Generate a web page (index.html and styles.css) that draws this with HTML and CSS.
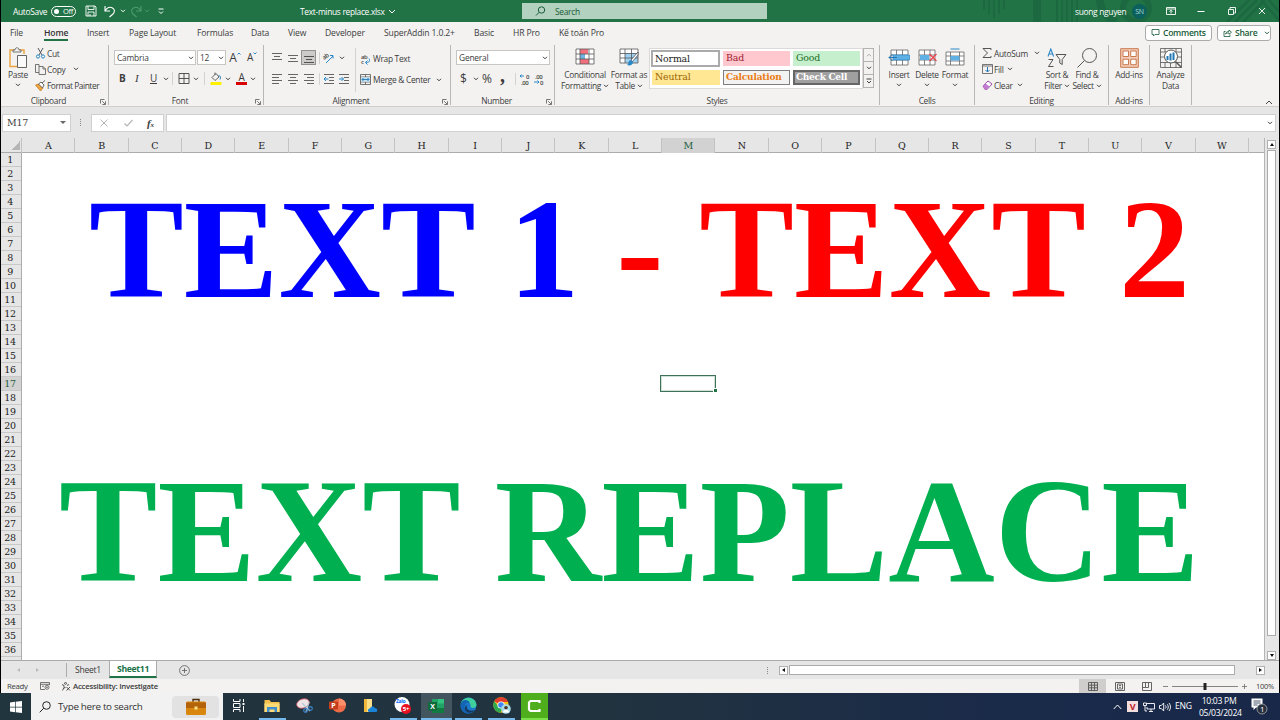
FILE: index.html
```html
<!DOCTYPE html>
<html lang="en">
<head>
    <meta charset="UTF-8">
    <meta name="viewport" content="width=device-width, initial-scale=1.0">
    <title>Text-minus replace.xlsx</title>
    <link rel="stylesheet" href="styles.css">
</head>
<body>
    <!-- shared icons -->
    <svg class="defs">
        <symbol id="caret" viewBox="0 0 6 4"><path d="M1 .8 3 2.8 5 .8" fill="none" stroke="currentColor" stroke-width="1"/></symbol>
        <symbol id="launcher" viewBox="0 0 6 6"><path d="M.5 4.5v-4h4M2.2 2.2l3 3M5.5 2.3v3.2H2.3" fill="none" stroke="#555" stroke-width=".8"/></symbol>
    </svg>

    <div class="window">
        <header class="title-bar">
            <svg class="swirls" width="300" height="22" viewBox="0 0 300 22" fill="none" stroke="#1c6840"><path d="M5 0v10M10 0v14M15 0v18M20 0v14M25 0v9M78 0v22M83 0v22M88 0v22M93 0v22M98 0v22" stroke-width="2"/><circle cx="157" cy="8" r="13" stroke-width="6"/><path d="M248 22l22-22M256 22l22-22M264 22l22-22M290 0l10 12M282 0l18 20" stroke-width="2.500"/><path d="M58 0v22M121 0c0 12 8 18 16 22" stroke-width="8"/></svg>
            <div class="quick-access">
                <span class="autosave">AutoSave</span>
                <span class="toggle"><i></i>Off</span>
                <svg width="12" height="12" viewBox="0 0 12 12" fill="none" stroke="#fff" stroke-width=".9"><path d="M1 1h9l1 1v9H1zM3 1v3.5h6V1M3 11V7h6v4M5 9v2"/></svg>
                <svg width="12" height="13" viewBox="0 0 12 13" fill="none" stroke="#fff" stroke-width="1.1"><path d="M1 1v5h5M1.3 5.5C3 2.5 6 1.5 8.5 3s2.500 4 .5 6L5.500 12"/></svg>
                <svg class="caret"><use href="#caret"/></svg>
                <svg width="12" height="13" viewBox="0 0 12 13" fill="none" stroke="#4f9a70" stroke-width="1.100"><path d="M11 1v5H6M10.700 5.500C9 2.500 6 1.500 3.500 3S1 7 3 9l3.500 3"/></svg>
                <svg class="caret faded"><use href="#caret"/></svg>
                <svg width="6" height="7" viewBox="0 0 6 7" fill="none" stroke="#fff"><path d="M.5 1h5M1 3.500l2 2 2-2"/></svg>
            </div>
            <div class="file-name">Text-minus replace.xlsx <svg width="8" height="5" viewBox="0 0 8 5"><path d="M1 1l3 3 3-3" fill="none" stroke="#fff"/></svg></div>
            <div class="search"><svg width="11" height="10" viewBox="0 0 11 10" fill="none" stroke="#185c37"><circle cx="6.500" cy="4" r="3.200"/><path d="M4.200 6.300 1 9.500"/></svg>Search</div>
            <div class="account">
                <span class="user">suong nguyen</span>
                <span class="avatar">SN</span>
                <svg width="10" height="8" viewBox="0 0 10 8" fill="none" stroke="#fff" stroke-width=".9"><path d="M.5.5h9v7h-9zM.5 2h9M5 6.500V3.200M3.500 4.700 5 3.200l1.500 1.500"/></svg>
                <svg width="8" height="8" viewBox="0 0 8 8"><path d="M.5 4.500h7" stroke="#fff"/></svg>
                <svg width="8" height="8" viewBox="0 0 8 8" fill="none" stroke="#fff" stroke-width=".9"><path d="M.500 2.500h5v5h-5zM2 2.300V.500h5.500V6H5.700"/></svg>
                <svg width="8" height="8" viewBox="0 0 8 8"><path d="M1 1l6 6M7 1 1 7" stroke="#fff" stroke-width=".9"/></svg>
            </div>
        </header>

        <nav class="tabs">
            <div class="tab-list">
                <span>File</span><span><b class="active">Home</b></span><span>Insert</span><span>Page Layout</span><span>Formulas</span><span>Data</span><span>View</span><span>Developer</span><span>SuperAddin 1.0.2+</span><span>Basic</span><span>HR Pro</span><span>Kế toán Pro</span>
            </div>
            <span class="pill comments"><svg width="9" height="8" viewBox="0 0 9 8" fill="none" stroke="#185c37" stroke-width=".8"><path d="M1 .500h7v5H4L2.500 7V5.500H1z"/></svg>Comments</span>
            <span class="pill share"><svg width="9" height="8" viewBox="0 0 9 8" fill="none" stroke="#185c37" stroke-width=".8"><path d="M2.500 2.500H1v5h6V5.500M2.500 5c.500-2 2-2.500 3.500-2.500V1l2.500 2.200L6 5.200V4c-1.500 0-2.500 0-3.500 1z"/></svg>Share<svg class="caret"><use href="#caret"/></svg></span>
        </nav>

        <section class="ribbon">
            <div class="group clipboard">
                <div class="body">
                    <div class="big">
                        <svg width="20" height="22" viewBox="0 0 20 22" fill="none"><path d="M9 19.500H2V3h14v4" stroke="#e8a33d" stroke-width="1.400"/><path d="M5 5V3h2c0-3 4-3 4 0h2v2z" fill="#f3f2f1" stroke="#666" stroke-width=".9"/><path d="M9.500 8.500h9v12h-9z" fill="#fafafa" stroke="#555" stroke-width=".9"/></svg>
                        <span>Paste</span><svg class="caret"><use href="#caret"/></svg>
                    </div>
                    <div class="list">
                        <div><svg width="11" height="11" viewBox="0 0 11 11" fill="none"><path d="M3 0l4 7M8 0 4 7" stroke="#555"/><circle cx="3" cy="8.500" r="1.600" stroke="#2b88c8"/><circle cx="8" cy="8.500" r="1.600" stroke="#2b88c8"/></svg><span>Cut</span></div>
                        <div><svg width="11" height="11" viewBox="0 0 11 11" fill="none" stroke="#555" stroke-width=".8"><path d="M4 2.500V.500H.500v8H4M4 2.500h4l2.500 2.500v5.500H4zM8 2.500V5h2.500"/></svg><span>Copy</span><svg class="caret"><use href="#caret"/></svg></div>
                        <div><svg width="11" height="11" viewBox="0 0 11 11"><path d="M.500 5 4 4l4 4-2.500 3z" fill="#f2a640" stroke="#c87816" stroke-width=".8"/><path d="M3.500 4l2.500-2 3 3-1.500 3zM7 3l3-2.500" fill="#fff" stroke="#555" stroke-width=".9"/></svg><span class="painter">Format Painter</span></div>
                    </div>
                </div>
                <div class="label">Clipboard<svg class="launcher"><use href="#launcher"/></svg></div>
            </div>

            <div class="group font">
                <div class="body rows">
                    <div class="font-top">
                        <span class="combo">Cambria<svg class="caret"><use href="#caret"/></svg></span>
                        <span class="combo">12<svg class="caret"><use href="#caret"/></svg></span>
                        <span class="grow">A<svg width="4" height="3" viewBox="0 0 4 3"><path d="M.5 2.500 2 1l1.500 1.500" fill="none" stroke="#2b88c8"/></svg></span>
                        <span class="grow small">A<svg width="4" height="3" viewBox="0 0 4 3"><path d="M.5.5 2 2 3.500.5" fill="none" stroke="#2b88c8"/></svg></span>
                    </div>
                    <div class="font-bottom">
                        <b>B</b><em>I</em><u>U</u><svg class="caret"><use href="#caret"/></svg>
                        <svg width="18" height="13" viewBox="0 0 18 13" fill="none"><path d="M.500 0v13" stroke="#d4d2d0"/><path d="M7 1.500h10v10H7zM12 1.500v10M7 6.500h10" stroke="#444" stroke-width=".9"/></svg>
                        <svg class="caret"><use href="#caret"/></svg>
                        <svg width="18" height="13" viewBox="0 0 18 13" fill="none"><path d="M.500 0v13" stroke="#d4d2d0"/><path d="M8 5.500l4-4 3 3.500-4 3.500zM11 3V.500" stroke="#555" stroke-width=".9"/><path d="M14.500 3.500c2 0 2.500 2 1.500 4" stroke="#2b88c8"/><path d="M6.500 10h11v3h-11z" fill="#fff200"/></svg>
                        <svg class="caret"><use href="#caret"/></svg>
                        <span class="font-color">A</span>
                        <svg class="caret"><use href="#caret"/></svg>
                    </div>
                </div>
                <div class="label">Font<svg class="launcher"><use href="#launcher"/></svg></div>
            </div>

            <div class="group alignment">
                <div class="body">
                    <div class="align-grid">
                        <svg width="10" height="10" viewBox="0 0 10 10"><path d="M0 .500h10M2 3.500h6M0 6.500h10" stroke="#555" stroke-width=".9"/></svg>
                        <svg width="10" height="10" viewBox="0 0 10 10"><path d="M0 2.500h10M2 5.500h6M0 8.500h10" stroke="#555" stroke-width=".9"/></svg>
                        <span class="pressed"><svg width="10" height="10" viewBox="0 0 10 10"><path d="M0 3.500h10M2 6.500h6M0 9.500h10" stroke="#444" stroke-width=".9"/></svg></span>
                        <svg width="15" height="12" viewBox="0 0 15 12" fill="none"><path d="M.500 0v12" stroke="#d4d2d0"/><text x="4" y="7" class="tiny" transform="rotate(-35 6 6)">ab</text><path d="M7 11l7-7M11 3.500h3v3" stroke="#2b88c8"/></svg>
                        <svg class="caret"><use href="#caret"/></svg>
                        <svg width="10" height="10" viewBox="0 0 10 10"><path d="M0 .500h10M0 3.500h7M0 6.500h10M0 9.500h7" stroke="#555" stroke-width=".9"/></svg>
                        <svg width="10" height="10" viewBox="0 0 10 10"><path d="M0 .500h10M2 3.500h6M0 6.500h10M2 9.500h6" stroke="#555" stroke-width=".9"/></svg>
                        <svg width="10" height="10" viewBox="0 0 10 10"><path d="M0 .500h10M3 3.500h7M0 6.500h10M3 9.500h7" stroke="#555" stroke-width=".9"/></svg>
                        <svg width="15" height="12" viewBox="0 0 15 12" fill="none"><path d="M.500 0v12" stroke="#d4d2d0"/><path d="M5 1.500h10M10 4.500h5M10 7.500h5M5 10.500h10" stroke="#555" stroke-width=".9"/><path d="M5 6h4.500M7 4 5 6l2 2" stroke="#2b88c8"/></svg>
                        <svg width="10" height="10" viewBox="0 0 10 10" fill="none"><path d="M0 .500h10M5 3.500h5M5 6.500h5M0 9.500h10" stroke="#555" stroke-width=".9"/><path d="M0 5h4.500M2.500 3l2 2-2 2" stroke="#2b88c8"/></svg>
                    </div>
                    <div class="wrap-col">
                        <div><svg width="11" height="12" viewBox="0 0 11 12"><text x="1" y="5.500" class="tiny">ab</text><text x="1" y="11" class="tiny">c</text><path d="M9 5.500c1.500 3 0 4-3.500 4M7.500 7.500l-2 2 2 2" fill="none" stroke="#2b88c8"/></svg><span>Wrap Text</span></div>
                        <div><svg width="11" height="11" viewBox="0 0 11 11" fill="none"><path d="M.5.5h10v10H.5zM.5 3h10M.5 8h10M5.500.5V3M5.500 8v2.500" stroke="#555" stroke-width=".8"/><path d="M1 3.300h9v4.400H1z" fill="#c5e3f5"/><path d="M2 5.500h7M3.500 4 2 5.500 3.500 7M7.500 4 9 5.500 7.500 7" stroke="#2077b4" stroke-width=".9"/></svg><span>Merge &amp; Center</span><svg class="caret"><use href="#caret"/></svg></div>
                    </div>
                </div>
                <div class="label">Alignment<svg class="launcher"><use href="#launcher"/></svg></div>
            </div>

            <div class="group number">
                <div class="body rows">
                    <span class="combo">General<svg class="caret"><use href="#caret"/></svg></span>
                    <div class="number-row">
                        <span class="sym">$</span><svg class="caret"><use href="#caret"/></svg><span class="sym">%</span><span class="sym comma">,</span>
                        <svg width="16" height="12" viewBox="0 0 16 12"><path d="M.500 0v12" stroke="#d4d2d0"/><path d="M5 3h4M6.500 1.500 5 3l1.500 1.500" fill="none" stroke="#2b88c8"/><text x="11" y="5.500" class="tiny">0</text><text x="6" y="11.500" class="tiny">.00</text></svg>
                        <svg width="11" height="12" viewBox="0 0 11 12"><text x="1" y="5.500" class="tiny">.00</text><text x="6" y="11.500" class="tiny">0</text><path d="M0 9h5M3.500 7.500 5 9l-1.500 1.500" fill="none" stroke="#2b88c8"/></svg>
                    </div>
                </div>
                <div class="label">Number<svg class="launcher"><use href="#launcher"/></svg></div>
            </div>

            <div class="group styles">
                <div class="body">
                    <div class="big cond">
                        <svg width="20" height="17" viewBox="0 0 20 17"><path d="M1 1h18v15H1z" fill="#fff"/><path d="M5 1h8v5H5zM5 11h9v5H5z" fill="#f0717d"/><path d="M5 6h5v5H5z" fill="#6db3e3"/><path d="M1 1h18v15H1zM1 6h18M1 11h18M5 1v15M14 1v15" fill="none" stroke="#555" stroke-width=".8"/></svg>
                        <span>Conditional<br>Formatting <svg class="caret"><use href="#caret"/></svg></span>
                    </div>
                    <div class="big table">
                        <svg width="20" height="18" viewBox="0 0 20 18"><path d="M1 1h18v14H1z" fill="#fff"/><path d="M6 5h13v10H6z" fill="#9fd0f0"/><path d="M1 1h18v14H1zM1 5.500h18M1 10h18M6 1v14M12.500 1v14" fill="none" stroke="#555" stroke-width=".8"/><path d="M19 4l-7 8 1 2 6-7z" fill="#fff" stroke="#444" stroke-width=".7"/><path d="M12 12c-3 0-2 4-4 5 3 1 6 0 6-3z" fill="#2b88c8"/></svg>
                        <span>Format as<br>Table <svg class="caret"><use href="#caret"/></svg></span>
                    </div>
                    <div class="gallery">
                        <span class="normal">Normal</span><span class="bad">Bad</span><span class="good">Good</span>
                        <span class="neutral">Neutral</span><span class="calc">Calculation</span><span class="check">Check Cell</span>
                    </div>
                    <div class="gallery-scroll">
                        <span><svg class="caret flip faded-dark"><use href="#caret"/></svg></span>
                        <span><svg class="caret"><use href="#caret"/></svg></span>
                        <span><svg width="6" height="6" viewBox="0 0 6 6"><path d="M.500 1h5M1 3l2 2 2-2" fill="none" stroke="#444"/></svg></span>
                    </div>
                </div>
                <div class="label">Styles</div>
            </div>

            <div class="group cells">
                <div class="body">
                    <div class="big">
                        <svg width="22" height="19" viewBox="0 0 22 19"><path d="M3 2h17v15H3zM3 7h17M3 12h17M8.500 2v15M14.500 2v15" fill="#fff" stroke="#666" stroke-width=".8"/><path d="M5 7h16.500v5H5z" fill="#5fb0e5" stroke="#2b88c8" stroke-width=".7"/><path d="M9 9.500H1M4.500 6 1 9.500 4.500 13" fill="none" stroke="#2077b4"/></svg>
                        <span>Insert</span><svg class="caret"><use href="#caret"/></svg>
                    </div>
                    <div class="big">
                        <svg width="22" height="19" viewBox="0 0 22 19"><path d="M3 2h16v15H3zM3 7h16M3 12h16M8.500 2v15M14 2v15" fill="#fff" stroke="#666" stroke-width=".8"/><path d="M4 7h9v5H4z" fill="#5fb0e5"/><path d="M13.500 6l7 7M20.500 6l-7 7" stroke="#e8434d" stroke-width="1.200"/></svg>
                        <span>Delete</span><svg class="caret"><use href="#caret"/></svg>
                    </div>
                    <div class="big">
                        <svg width="20" height="19" viewBox="0 0 20 19"><path d="M1 4h18v13H1zM1 8h18M1 13h18M5.500 4v13M14.500 4v13" fill="#fff" stroke="#666" stroke-width=".8"/><path d="M5.500 8h9v4.500h-9z" fill="#5fb0e5"/><path d="M5.500 1h9" stroke="#2b88c8"/></svg>
                        <span>Format</span><svg class="caret"><use href="#caret"/></svg>
                    </div>
                </div>
                <div class="label">Cells</div>
            </div>

            <div class="group editing">
                <div class="body">
                    <div class="list">
                        <div><svg width="11" height="10" viewBox="0 0 11 10"><path d="M9 2V.500H1L5.500 5 1 9.500h8V8" fill="none" stroke="#555"/></svg><span>AutoSum</span><svg class="caret far"><use href="#caret"/></svg></div>
                        <div><svg width="11" height="10" viewBox="0 0 11 10" fill="none"><path d="M.500.500h10v9H.500zM.500 2h10" stroke="#555" stroke-width=".8"/><path d="M5.500 3v5M3.500 6l2 2 2-2" stroke="#2077b4"/></svg><span>Fill</span><svg class="caret"><use href="#caret"/></svg></div>
                        <div><svg width="11" height="10" viewBox="0 0 11 10"><path d="M1 6l5-5 4 3-5 5.500H3z" fill="#fff" stroke="#9b4fa8"/><path d="M1 6l2.500-2.500 4 3L5 9.500H3z" fill="#c17bd0"/></svg><span>Clear</span><svg class="caret"><use href="#caret"/></svg></div>
                    </div>
                    <div class="big">
                        <svg width="20" height="20" viewBox="0 0 20 20" fill="none"><path d="M1 8.500 3.800 1l2.800 7.500M2 6h3.600" stroke="#2b88c8" stroke-width="1.100"/><path d="M1.500 11.500H6L1.500 18.500H6.500M9 6.500h10l-3.800 5v5l-2.400-1.500v-3.500z" stroke="#555"/></svg>
                        <span>Sort &amp;<br>Filter <svg class="caret"><use href="#caret"/></svg></span>
                    </div>
                    <div class="big">
                        <svg width="20" height="20" viewBox="0 0 20 20" fill="none" stroke="#555"><circle cx="12.500" cy="7.500" r="7"/><path d="M7.500 12.500.500 19.500"/></svg>
                        <span>Find &amp;<br>Select <svg class="caret"><use href="#caret"/></svg></span>
                    </div>
                </div>
                <div class="label">Editing</div>
            </div>

            <div class="group addins">
                <div class="body">
                    <div class="big">
                        <svg width="19" height="20" viewBox="0 0 19 20" fill="#fff" stroke="#c8784d" stroke-width="1"><path d="M.700.700h17.600v18.600H.700z" fill="#f3cdb8"/><path d="M3 3h5.500v5.500H3zM10.700 3h5.500v5.500h-5.500zM3 11.200h5.500v5.500H3zM10.700 11.200h5.500v5.500h-5.500z"/></svg>
                        <span>Add-ins</span>
                    </div>
                </div>
                <div class="label">Add-ins</div>
            </div>

            <div class="group analyze">
                <div class="body">
                    <div class="big">
                        <svg width="22" height="21" viewBox="0 0 22 21" fill="none" stroke="#555"><path d="M.500.500h21v19H.500zM.500 4h21M.500 9h4M.500 14.500h21M17 9h5M5 14v6M10.500 15v5M16 15v5M5 .500V4M16 .500V4" stroke-width=".8"/><circle cx="11" cy="8.500" r="6.500" fill="#fff"/><path d="M15.500 13.500l6 6" stroke-width="1.500"/><path d="M7.500 12V8M10.500 12.500V5.500M13.500 12V4.500" stroke="#2077b4" stroke-width="2"/></svg>
                        <span>Analyze<br>Data</span>
                    </div>
                </div>
            </div>
            <svg class="collapse" width="8" height="5" viewBox="0 0 8 5"><path d="M1 4l3-3 3 3" fill="none" stroke="#444"/></svg>
        </section>

        <div class="formula-bar">
            <span class="name-box">M17<i class="down"></i></span>
            <span class="grip"></span>
            <span class="fx-box">
                <svg width="8" height="8" viewBox="0 0 8 8"><path d="M.500.500l7 7M7.500.500l-7 7" stroke="#b5b5b5"/></svg>
                <svg width="9" height="8" viewBox="0 0 9 8"><path d="M.500 4.500l2.500 2.500 5.500-6" fill="none" stroke="#b5b5b5" stroke-width="1.200"/></svg>
                <em>f<small>x</small></em>
            </span>
            <span class="formula"><svg class="caret"><use href="#caret"/></svg></span>
        </div>

        <main class="grid-area">
            <div class="sheet">
                <div class="col-heads" id="cols"><span class="corner"></span></div>
                <div class="sheet-body">
                    <div class="row-heads" id="rows"></div>
                    <div class="canvas">
                        <div class="line-one"><span class="blue">TEXT 1</span> <span class="red dash">-</span> <span class="red">TEXT 2</span></div>
                        <div class="line-two">TEXT REPLACE</div>
                        <div class="cursor"></div>
                    </div>
                </div>
            </div>
            <div class="v-scroll"><span class="arrow up"></span><span class="v-thumb"></span><span class="arrow dn"></span></div>
        </main>

        <div class="sheet-tabs">
            <span class="nav-arrow left"></span><span class="nav-arrow right"></span>
            <span class="sheet-tab">Sheet1</span>
            <span class="sheet-tab current">Sheet11</span>
            <svg class="add" width="11" height="11" viewBox="0 0 11 11" fill="none" stroke="#666" stroke-width=".9"><circle cx="5.500" cy="5.500" r="4.900"/><path d="M5.500 3v5M3 5.500h5"/></svg>
            <span class="grip"></span>
            <div class="h-scroll"><span class="arrow lt"></span><span class="h-thumb"></span><span class="arrow rt"></span></div>
        </div>

        <footer class="status">
            <span class="ready">Ready</span>
            <svg width="10" height="8" viewBox="0 0 10 8" fill="none" stroke="#555" stroke-width=".8"><path d="M5 7.500H.500v-7h9V3M.500 2.300h9M2 4.200h2"/><circle cx="7" cy="5.300" r="2"/><circle cx="7" cy="5.300" r=".5"/></svg>
            <svg class="acc" width="10" height="9" viewBox="0 0 10 9" fill="none" stroke="#444" stroke-width=".9"><circle cx="4.500" cy="1.400" r="1"/><path d="M1 2.500l2 1v2L1.500 8.500M8 2.500l-2 1M3 6l1.500-.5M5.500 5l3.500 3.500M9 5 5.500 8.500"/></svg>
            <span class="acc-text">Accessibility: Investigate</span>
            <div class="views">
                <span class="on"><svg width="10" height="9" viewBox="0 0 10 9" fill="none" stroke="#555" stroke-width=".9"><path d="M.500.500h9v8h-9zM.500 3.200h9M.500 5.800h9M3.500.500v8M6.500.500v8"/></svg></span>
                <span><svg width="10" height="9" viewBox="0 0 10 9" fill="none" stroke="#555" stroke-width=".9"><path d="M.500.500h9v8h-9zM2.500 2h5v5h-5zM4 3.500h2M4 5.300h2"/></svg></span>
                <span><svg width="10" height="9" viewBox="0 0 10 9" fill="none" stroke="#555" stroke-width=".9"><path d="M.500.500h9v8h-9zM3.500.500v5h3v-5M.500 5.500h3"/></svg></span>
            </div>
            <svg class="zoom" width="86" height="9" viewBox="0 0 86 9"><path d="M1 4.500h5M10 4.500h66M80 4.500h5M82.500 2v5" stroke="#777" stroke-width=".9"/><path d="M41.500 1h3v7h-3z" fill="#222"/></svg>
            <span class="percent">100%</span>
        </footer>
    </div>

    <div class="taskbar">
        <span class="start"><svg width="12" height="12" viewBox="0 0 12 12" fill="#fff"><path d="M0 1.500l5-.7v4.900H0zM5.700.700 12 0v5.700H5.700zM0 6.400h5v4.800l-5-.7zM5.700 6.400H12V12l-6.300-.8z"/></svg></span>
        <div class="task-search">
            <svg width="12" height="12" viewBox="0 0 12 12" fill="none" stroke="#222"><circle cx="7.500" cy="4.500" r="3.800"/><path d="M4.700 7.300.700 11.300"/></svg>
            <span>Type here to search</span>
            <i><svg width="22" height="18" viewBox="0 0 22 18"><path d="M8 4V1.500h6V4" fill="none" stroke="#4a2c0c" stroke-width="1.400"/><rect x="1" y="3.500" width="20" height="13.500" rx="1.500" fill="#d9860f"/><path d="M1 4.500h20V10H1z" fill="#b3640b"/><path d="M9.500 8.500h3v3h-3z" fill="#ffe08a"/></svg></i>
        </div>
        <div class="apps">
            <span><svg width="13" height="13" viewBox="0 0 13 13" fill="none" stroke="#fff"><path d="M.500 0v2.500h6.500V0M.500 13v-2.500h6.500V13M.500 4.500h6.500v4H.500zM10.500 0v3M10.500 7v6"/><path d="M9.500 4h2v2h-2z" fill="#fff" stroke="none"/></svg></span>
            <span class="open"><svg width="16" height="14" viewBox="0 0 16 14"><path d="M.500 1h5l1.500 2h8.500v10H.500z" fill="#f3c14b"/><path d="M.500 4.500h15V13H.500z" fill="#ffdb78"/><path d="M3 13V8h10v5h-2.500v-2.500h-5V13z" fill="#3f8fd0"/></svg></span>
            <span><svg width="17" height="15" viewBox="0 0 17 15"><ellipse cx="7" cy="5.500" rx="6.500" ry="4.500" fill="#f0e4e6" stroke="#d05060" stroke-width=".7" transform="rotate(-18 7 5.500)"/><path d="M6 5l8 8M13 4l-3 10" stroke="#b8c8d4" stroke-width="1.300"/><circle cx="9.500" cy="12.500" r="1.800" fill="none" stroke="#3c84c8" stroke-width="1.200"/><circle cx="14.500" cy="10.500" r="1.800" fill="none" stroke="#3c84c8" stroke-width="1.200"/></svg></span>
            <span><svg width="17" height="15" viewBox="0 0 17 15"><circle cx="10" cy="7.500" r="7" fill="#ed6c47"/><path d="M10 .500a7 7 0 0 1 7 7h-7z" fill="#ff8f6b"/><rect y="3.500" width="9" height="8" rx="1" fill="#c43e1c"/><text x="2.200" y="10" class="logo">P</text></svg></span>
            <span><svg width="15" height="15" viewBox="0 0 15 15"><path d="M1 1h8v13H1z" fill="#ffe08a"/><path d="M1 1h3v13H1z" fill="#f0b93c"/><path d="M6 14c-2-1-1-3.500 1-3.500.8-2.500 4-2.500 4.700-.5 3 0 3.300 3.500 1.300 4z" fill="#1b84d8"/></svg></span>
            <span class="open"><svg width="18" height="17" viewBox="0 0 18 17"><circle cx="8" cy="7.500" r="7.500" fill="#fff"/><text x="2" y="6" class="zalo">Zalo</text><circle cx="12" cy="12" r="5" fill="#e81123"/><text x="8.800" y="14.300" class="badge">5+</text></svg></span>
            <span class="open focused"><svg width="16" height="14" viewBox="0 0 16 14"><path d="M4 0h12v14H4z" fill="#21a366"/><path d="M10 0h6v4.500h-6z" fill="#33c481"/><path d="M4 9h12v5H4z" fill="#107c41"/><path d="M0 3h9v8.500H0z" fill="#0f6b39"/><text x="2.200" y="10" class="logo">X</text></svg></span>
            <span class="open"><svg width="17" height="17" viewBox="0 0 17 17"><circle cx="8.500" cy="8.500" r="8" fill="#1b78ca"/><path d="M.700 7C2-1 15-2 16.500 7.500c0 4-5 4-6 2.500 1-3-2-5.500-5-4.500-2 .500-4 1-4.800 1.500z" fill="#3fcf9c"/><path d="M.700 7C2 1.500 9 2 10 6.500 7 4.500 4 6.500 4.500 10.500c.5 3 3 5.500 6.500 5.600C5 18-.500 13 .700 7z" fill="#1464b4"/><path d="M7 8c-1.500 4 2 7 8 5-2 3-7 4-9 1-2-2-1-5 1-6z" fill="#16385c"/></svg></span>
            <span class="open"><svg width="18" height="17" viewBox="0 0 18 17"><circle cx="8" cy="8" r="7.700" fill="#fbc116"/><path d="M8 8 1.300 4.200A7.700 7.700 0 0 1 14.700 4.200L15 5H8z" fill="#e33b2e"/><path d="M1.300 4.200a7.700 7.700 0 0 0 6 11.500L10 11 5 9z" fill="#2da94f"/><circle cx="8" cy="8" r="3.600" fill="#fff"/><circle cx="8" cy="8" r="2.800" fill="#4285f4"/><circle cx="13" cy="12" r="4.800" fill="#a8dbe8"/><circle cx="13" cy="10.800" r="1.800" fill="#4b3428"/><path d="M9.800 15.500c1-4 5.500-4 6.500 0z" fill="#fff"/></svg></span>
            <span class="camtasia"><svg width="14" height="14" viewBox="0 0 14 14"><path d="M12.500 4V2H3.500L2 3.500v7L3.500 12h9v-2" fill="none" stroke="#fff" stroke-width="2.200"/></svg></span>
        </div>
        <div class="tray">
            <svg width="9" height="6" viewBox="0 0 9 6"><path d="M.700 5l3.800-4 3.800 4" fill="none" stroke="#fff"/></svg>
            <span class="unikey">V</span>
            <svg width="12" height="10" viewBox="0 0 12 10" fill="none" stroke="#fff" stroke-width=".9"><path d="M4 1.500h7.500v5.500H4V5M.500 1h3v2.500h-3zM2 3.500v5.500h2M6 9.500h4M8 7v2.500"/></svg>
            <svg width="12" height="10" viewBox="0 0 12 10" fill="none" stroke="#fff" stroke-width=".9"><path d="M.500 3.500h1.800L4.700 1v8L2.300 6.500H.500zM6.500 3.500c.7 1 .7 2 0 3M8.300 2.300c1.300 2 1.300 3.400 0 5.400M10 1c2 3 2 5 0 8"/></svg>
            <span class="lang">ENG</span>
            <span class="clock">10:03 PM<br>05/03/2024</span>
            <svg class="note" width="17" height="17" viewBox="0 0 17 17"><path d="M.500.500h11v9H5L2.500 12V9.500h-2z" fill="#fff"/><path d="M2.500 3h7M2.500 5h7M2.500 7h4" stroke="#1d2c48" stroke-width=".8"/><circle cx="11" cy="11" r="5" fill="#26303f" stroke="#aaa" stroke-width=".8"/><text x="9" y="13.800" class="count">1</text></svg>
        </div>
    </div>

    <script>
        // column letters A-W and row numbers 1-36
        const cols = document.getElementById('cols');
        const rows = document.getElementById('rows');
        for (let i = 0; i < 23; i++) {
            const cell = document.createElement('span');
            cell.textContent = String.fromCharCode(65 + i);
            if (cell.textContent === 'M') cell.className = 'selected';
            cols.appendChild(cell);
        }
        for (let i = 1; i <= 36; i++) {
            const cell = document.createElement('span');
            cell.textContent = i;
            if (i === 17) cell.className = 'selected';
            rows.appendChild(cell);
        }
    </script>
</body>
</html>
```
FILE: styles.css
```css
* {
    box-sizing: border-box;
}
body {
    margin: 0;
    width: 1280px;
    height: 720px;
    overflow: hidden;
    font-family: 'Open Sans', 'Noto Sans', sans-serif;
    font-size: 8.4px;
    letter-spacing: -0.3px;
    line-height: 11px;
    color: #3c3c3c;
    background: #000;
    white-space: nowrap;
}
svg {
    flex: none;
    display: block;
}
.defs {
    position: absolute;
    width: 0;
    height: 0;
}
.caret {
    width: 6px;
    height: 4px;
}
.window {
    height: 693px;
    border-left: 1px solid #000;
    border-right: 1px solid #000;
    background: #e6e6e6;
    display: flex;
    flex-direction: column;
}

/* title bar */
.title-bar {
    position: relative;
    height: 22px;
    background: #217346;
    color: #fff;
    display: grid;
    grid-template-columns: 299px 222px 245px 1fr;
    align-items: center;
}
.quick-access {
    display: grid;
    grid-template-columns: 38px 34px 19px 16px 10px 14px 14px 8px;
    align-items: center;
    padding-left: 12px;
}
.toggle {
    width: 25px;
    height: 11px;
    border: 1px solid #fff;
    border-radius: 6px;
    display: flex;
    align-items: center;
    gap: 4px;
    padding-left: 2px;
    font-size: 7.5px;
}
.toggle i {
    width: 5px;
    height: 5px;
    border-radius: 50%;
    background: #fff;
}
.faded {
    color: #4f9a70;
}
.file-name {
    display: flex;
    align-items: center;
    gap: 3px;
}
.search {
    height: 16px;
    background: #b3d1bf;
    color: #185c37;
    display: flex;
    align-items: center;
    gap: 9px;
    padding-left: 13px;
}
.swirls {
    position: absolute;
    right: 0;
    top: 0;
}
.account {
    position: relative;
    display: grid;
    grid-template-columns: 57px 34px 31px 31px 30px 8px;
    align-items: center;
    padding-left: 308px;
}
.avatar {
    width: 15px;
    height: 15px;
    border-radius: 50%;
    background: #0b5f5c;
    color: #a9dcd9;
    font-size: 7px;
    line-height: 15px;
    text-align: center;
}

/* ribbon tabs */
.tabs {
    height: 22px;
    background: #f3f2f1;
    display: flex;
    align-items: center;
}
.tab-list {
    flex: 1;
    display: grid;
    grid-template-columns: 34px 43px 42px 68px 54px 37px 37px 59px 90px 39px 46px 60px;
    padding-left: 9px;
    height: 22px;
    line-height: 22px;
    font-size: 8.6px;
    letter-spacing: -0.15px;
}
.active {
    display: inline-block;
    height: 19px;
    border-bottom: 2px solid #217346;
    color: #333;
    font-weight: 600;
    vertical-align: top;
}
.pill {
    height: 16px;
    border: 1px solid #aaa;
    border-radius: 3px;
    background: #fff;
    color: #185c37;
    font-weight: 600;
    font-size: 8.6px;
    display: flex;
    align-items: center;
    gap: 3px;
    padding-left: 5px;
}
.comments {
    width: 67px;
    margin-right: 5px;
}
.share {
    width: 54px;
    margin-right: 8px;
}
.share .caret {
    margin-left: 4px;
}

/* ribbon */
.ribbon {
    height: 63px;
    background: #f3f2f1;
    border-bottom: 1px solid #d0cecc;
    display: flex;
}
.group {
    height: 60px;
    margin-top: 1px;
    border-right: 1px solid #b9b7b5;
}
.body {
    height: 50px;
    display: flex;
}
.rows {
    flex-direction: column;
}
.label {
    height: 12px;
    line-height: 12px;
    padding-right: 12px;
    text-align: center;
    position: relative;
}
.launcher {
    position: absolute;
    right: 2px;
    top: 4px;
    width: 6px;
    height: 6px;
}
.clipboard { width: 108px; }
.font { width: 155px; }
.alignment { width: 187px; }
.number { width: 104px; }
.styles { width: 325px; }
.cells { width: 95px; }
.editing { width: 134px; }
.addins { width: 41px; }
.analyze { width: 42px; }
.styles .label,
.cells .label,
.editing .label,
.addins .label {
    padding-right: 0;
}
.big {
    display: flex;
    flex-direction: column;
    align-items: center;
    text-align: center;
}
.big > svg:first-child {
    margin-top: 3px;
}
.clipboard .big > svg:first-child {
    margin-top: 2px;
}
.big > span {
    margin-top: auto;
}
.big > .caret {
    margin: 3px 0 8px;
}
.big span .caret {
    display: inline-block;
    vertical-align: 1px;
}
.clipboard .big {
    width: 34px;
}
.list > div {
    height: 16px;
    display: grid;
    grid-template-columns: 12px auto auto;
    align-items: center;
    justify-content: start;
}
.list .caret {
    margin-left: 4px;
}
.list .far {
    margin-left: 6px;
}
.clipboard .list .caret {
    margin-left: 8px;
}
.painter {
    letter-spacing: -0.45px;
}
.combo {
    height: 15px;
    border: 1px solid #c8c6c4;
    background: #fff;
    display: flex;
    align-items: center;
    justify-content: space-between;
    padding: 0 1px 0 2px;
    letter-spacing: -0.2px;
}
.font .body {
    padding: 5px 0 0 5px;
    gap: 7px;
}
.font-top {
    display: grid;
    grid-template-columns: 82px 29px;
    grid-auto-columns: 16px;
    grid-auto-flow: column;
    gap: 1px;
    align-items: center;
}
.grow {
    display: flex;
    justify-content: center;
    font-size: 12px;
}
.grow.small {
    font-size: 10px;
}
.font-bottom {
    display: grid;
    grid-template-columns: 16px 15px 13px 9px 21px 11px 21px 11px 14px 10px;
    align-items: center;
    padding-left: 5px;
    font-size: 10px;
}
.font-bottom em {
    font-family: 'Liberation Serif', serif;
    font-size: 11px;
}
.font-color {
    width: 11px;
    height: 13px;
    line-height: 10px;
    text-align: center;
    border-bottom: 3px solid #d90000;
}
.align-grid {
    width: 91px;
    display: grid;
    grid-template-columns: 16px 16px 15px 20px 10px;
    grid-template-rows: 23px 20px;
    align-items: center;
    padding: 1px 0 0 8px;
}
.pressed {
    width: 15px;
    height: 15px;
    margin-left: -3px;
    border: 1px solid #919191;
    background: #cdcbc9;
    display: flex;
    align-items: center;
    justify-content: center;
}
.wrap-col {
    margin: 3px 0;
    padding-left: 4px;
    border-left: 1px solid #d4d2d0;
}
.wrap-col > div {
    height: 21px;
    display: flex;
    align-items: center;
    gap: 2px;
}
.wrap-col .caret {
    margin-left: 4px;
}
.tiny {
    font-size: 6px;
    font-weight: 600;
    letter-spacing: -0.4px;
    fill: #444;
}
.number .body {
    padding: 5px 4px 0 5px;
    gap: 7px;
}
.number-row {
    display: grid;
    grid-template-columns: 13px 9px 18px 15px 19px 12px;
    align-items: center;
    padding-left: 4px;
}
.sym {
    font-size: 12px;
    line-height: 14px;
}
.comma {
    font: bold 20px/6px 'Liberation Serif', serif;
    margin-top: -9px;
}
.styles .body {
    padding-left: 6px;
}
.cond { width: 48px; }
.table { width: 40px; }
.cond > span,
.table > span {
    padding-bottom: 4px;
}
.gallery {
    width: 214px;
    height: 41px;
    margin-top: 3px;
    padding: 1px;
    background: #fff;
    border: 1px solid #dcdad8;
    display: grid;
    grid-template-columns: 69px 67px 67px;
    grid-template-rows: 17px 15px;
    column-gap: 3px;
    row-gap: 3px;
    font: 9.4px/14px 'DejaVu Serif', serif;
    letter-spacing: -0.15px;
}
.gallery span {
    padding-left: 3px;
}
.gallery .normal {
    border: 2px solid #ababab;
    color: #222;
    line-height: 13px;
    padding-left: 2px;
}
.bad { background: #ffc7ce; color: #9c2030; height: 15px; margin-top: 1px; }
.good { background: #c6efce; color: #206c20; height: 15px; margin-top: 1px; }
.neutral { background: #ffe794; color: #9c6500; margin-left: 1px; }
.gallery .calc {
    border: 1px solid #7f7f7f;
    background: #f2f2f2;
    color: #ea7d14;
    font-weight: bold;
    font-size: 9px;
    letter-spacing: -0.2px;
    line-height: 12px;
    padding-left: 2px;
}
.gallery .check {
    border: 2px solid #666;
    background: #a0a0a0;
    color: #fff;
    font-weight: bold;
    font-size: 9px;
    letter-spacing: -0.3px;
    line-height: 11px;
    padding-left: 1px;
}
.gallery-scroll {
    width: 11px;
    margin-top: 3px;
}
.gallery-scroll span {
    height: 14px;
    border: 1px solid #b5b3b1;
    display: flex;
    align-items: center;
    justify-content: center;
    margin-bottom: -1px;
}
.flip {
    transform: scaleY(-1);
}
.faded-dark {
    color: #aaa;
}
.cells .body {
    padding-left: 5px;
}
.cells .big {
    width: 28px;
}
.editing .list {
    width: 67px;
    padding-left: 7px;
}
.editing .big {
    width: 30px;
}
.editing .big > span,
.analyze .big > span {
    padding-bottom: 4px;
}
.addins .big,
.analyze .big {
    width: 100%;
}
.addins .big > span {
    padding-bottom: 15px;
}
.collapse {
    margin: 56px 6px 0 auto;
}

/* formula bar */
.formula-bar {
    height: 31px;
    display: flex;
    align-items: center;
    padding: 0 3px 0 1px;
}
.name-box,
.fx-box,
.formula {
    height: 18px;
    background: #fff;
    border: 1px solid #d0d0d0;
    display: flex;
    align-items: center;
}
.name-box {
    width: 69px;
    justify-content: space-between;
    padding: 0 4px;
    font: 9.5px 'DejaVu Serif', serif;
}
.down {
    border: 3px solid transparent;
    border-top-color: #666;
    border-bottom: 0;
}
.grip {
    width: 1px;
    height: 7px;
    margin: 0 10px 0 9px;
    border-left: 1px dotted #888;
}
.fx-box {
    width: 73px;
    gap: 16px;
    padding-left: 8px;
}
.fx-box em {
    margin-left: -2px;
    font: italic bold 11px 'Liberation Serif', serif;
}
.fx-box small {
    font-size: 7px;
}
.formula {
    flex: 1;
    margin-left: 2px;
    justify-content: flex-end;
    padding-right: 2px;
}

/* worksheet */
.grid-area {
    height: 522px;
    display: flex;
}
.sheet {
    width: 1264px;
    border-right: 1px solid #b5b5b5;
}
.col-heads {
    height: 15px;
    display: grid;
    grid-template-columns: 21px repeat(23, 53.35px);
    border-bottom: 1px solid #ababab;
    font: 9.5px/15px 'DejaVu Serif', serif;
    color: #222;
    text-align: center;
}
.col-heads span {
    border-right: 1px solid #c3c3c3;
}
.corner {
    background: linear-gradient(135deg, transparent 50%, #b5b5b5 50%) 10px 3px / 9px 9px no-repeat;
}
.col-heads .selected,
.row-heads .selected {
    background: #d2d2d2;
    color: #1e5c3a;
}
.col-heads .selected {
    border-bottom: 1px solid #217346;
}
.sheet-body {
    display: flex;
    height: 507px;
}
.row-heads {
    width: 21px;
    border-right: 1px solid #ababab;
    font: 9.5px/14px 'DejaVu Serif', serif;
    color: #222;
    text-align: center;
    padding-bottom: 3px;
}
.row-heads span {
    display: block;
    height: 14px;
    padding-right: 2px;
    border-bottom: 1px solid #c8c8c8;
}
.canvas {
    position: relative;
    flex: 1;
    background: #fff;
    font-family: 'Liberation Serif', serif;
    font-weight: bold;
    letter-spacing: 0;
}
.line-one {
    margin: 25px 0 0 67px;
    font-size: 142px;
    line-height: 142px;
}
.blue { color: #0000ff; }
.red { color: #ff0000; }
.dash { margin: 0 3px 0 1px; }
.line-two {
    margin: 138px 0 0 37px;
    font-size: 147.500px;
    line-height: 147px;
    color: #00b050;
}
.cursor {
    position: absolute;
    left: 638px;
    top: 222px;
    width: 56px;
    height: 17px;
    border: 1px solid #3f7259;
    outline: 1px solid #cfe0d7;
    outline-offset: -2px;
}
.cursor::after {
    content: '';
    position: absolute;
    right: -3px;
    bottom: -2px;
    width: 3px;
    height: 3px;
    background: #217346;
    border: 1px solid #fff;
    box-sizing: content-box;
}
.v-scroll {
    width: 11px;
    padding: 2px 0 0 2px;
    display: flex;
    flex-direction: column;
}
.arrow {
    width: 9px;
    height: 9px;
    background: #fff;
    border: 1px solid #b0b0b0;
    display: flex;
    align-items: center;
    justify-content: center;
}
.arrow::before {
    content: '';
    border: 2px solid transparent;
}
.up::before { border-bottom: 3px solid #111; border-top: 0; }
.dn::before { border-top: 3px solid #111; border-bottom: 0; }
.lt::before { border-right: 3px solid #111; border-left: 0; }
.rt::before { border-left: 3px solid #111; border-right: 0; }
.v-thumb {
    height: 487px;
    margin: 1px 0 15px;
    background: #fff;
    border: 1px solid #ababab;
}

/* sheet tabs */
.sheet-tabs {
    height: 19px;
    border-top: 1px solid #ababab;
    display: flex;
    align-items: center;
    padding-left: 16px;
}
.nav-arrow {
    border: 2px solid transparent;
}
.left { border-right: 3px solid #bbb; border-left: 0; margin-right: 16px; }
.right { border-left: 3px solid #bbb; border-right: 0; margin-right: 27px; }
.sheet-tab {
    width: 43px;
    height: 14px;
    line-height: 14px;
    border-left: 1px solid #ababab;
    text-align: center;
    font-size: 8.6px;
}
.current {
    width: 48px;
    height: 17px;
    line-height: 16px;
    margin-bottom: 1px;
    background: #fff;
    border-right: 1px solid #ababab;
    border-bottom: 2px solid #217346;
    color: #217346;
    font-weight: bold;
}
.add {
    margin-left: 22px;
}
.sheet-tabs .grip {
    margin: 0 11px 0 577px;
}
.h-scroll {
    display: flex;
    align-items: center;
}
.h-thumb {
    width: 446px;
    height: 10px;
    margin: 0 21px 0 1px;
    background: #fff;
    border: 1px solid #ababab;
}

/* status bar */
.status {
    height: 14px;
    background: #f3f2f1;
    display: flex;
    align-items: center;
    padding-left: 6px;
    font-size: 7.800px;
}
.ready {
    width: 33px;
}
.acc {
    margin: 0 2px 0 11px;
}
.acc-text {
    font-weight: 600;
    letter-spacing: -0.25px;
}
.views {
    display: flex;
    margin-left: auto;
}
.views span {
    width: 27px;
    height: 14px;
    display: flex;
    align-items: center;
    justify-content: center;
}
.views .on {
    background: #d0cecc;
}
.zoom {
    margin: 0 8px 0 2px;
}
.percent {
    width: 23px;
    font-size: 7.500px;
}

/* taskbar */
.taskbar {
    height: 27px;
    display: flex;
    background: linear-gradient(90deg, #21353e 0, #21333f 600px, #1a2a49 1000px, #192849);
    color: #fff;
}
.start {
    width: 31px;
    display: flex;
    align-items: center;
    justify-content: center;
}
.task-search {
    width: 192px;
    background: #f2f2f2;
    color: #333;
    display: flex;
    align-items: center;
    padding: 0 4px 0 8px;
    gap: 7px;
    font-size: 9.800px;
}
.task-search i {
    width: 47px;
    height: 22px;
    margin-left: auto;
    background: #e2e2e2;
    border-radius: 4px;
    display: flex;
    align-items: center;
    justify-content: center;
}
.apps {
    display: flex;
}
.apps span {
    width: 27px;
    margin: 0 2.900px;
    display: flex;
    align-items: center;
    justify-content: center;
    border-bottom: 2px solid transparent;
}
.apps .open {
    border-bottom-color: #76b9ed;
}
.apps .focused {
    width: 31px;
    margin: 0 .9px;
    background: #43555f;
}
.apps .camtasia {
    background: #4fae1b;
    border-bottom-color: #7be04a;
}
.logo {
    font-size: 7px;
    font-weight: bold;
    fill: #fff;
}
.zalo {
    font-size: 5px;
    font-weight: bold;
    fill: #0068ff;
}
.badge {
    font-size: 6px;
    font-weight: bold;
    fill: #fff;
}
.tray {
    margin-left: auto;
    display: grid;
    grid-template-columns: 14px 16px 16px 16px 24px 40px 27px;
    align-items: center;
    padding-right: 14px;
}
.unikey {
    width: 11px;
    height: 11px;
    background: #f4dede;
    color: #c0202a;
    font-weight: bold;
    font-size: 9px;
    text-align: center;
}
.lang {
    font-size: 8.600px;
}
.clock {
    text-align: center;
    line-height: 12px;
    font-size: 8.600px;
}
.note {
    margin-left: 12px;
}
.count {
    font-size: 8px;
    fill: #fff;
}
```
